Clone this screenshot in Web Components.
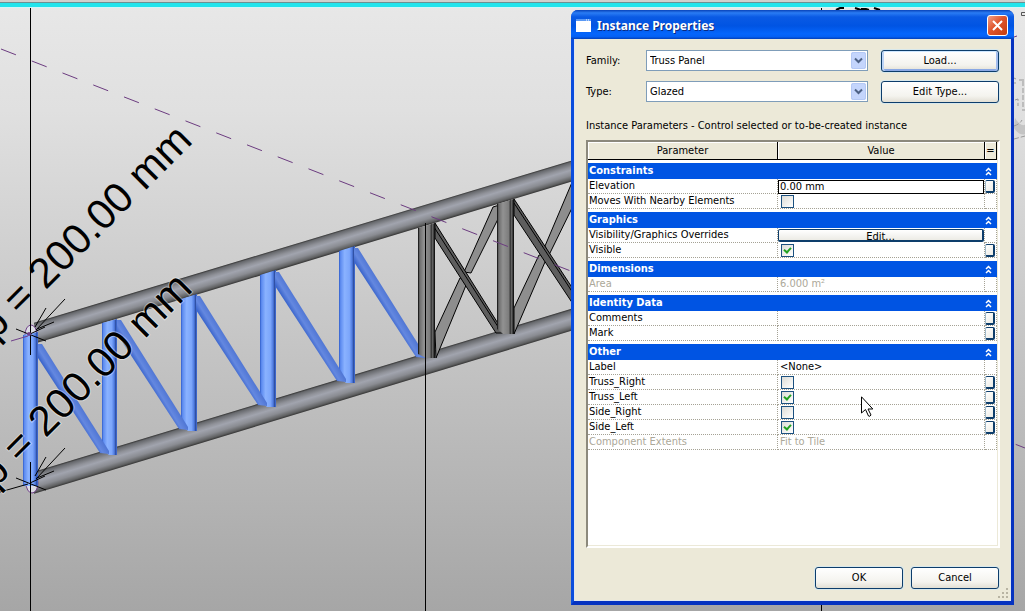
<!DOCTYPE html>
<html lang="en">
<head>
<meta charset="utf-8">
<title>Instance Properties</title>
<style>
html, body { margin: 0; height: 100%; }
body { font: 11px/14px "DejaVu Sans Condensed", "DejaVu Sans", sans-serif; color: #000; overflow: hidden; }
</style>
</head>
<body>
<model-workspace>
  <truss-view></truss-view>
  <xp-dialog slot="window" heading="Instance Properties">
    <family-form></family-form>
    <property-list></property-list>
    <xp-button slot="actions">OK</xp-button>
    <xp-button slot="actions">Cancel</xp-button>
  </xp-dialog>
  <mouse-pointer slot="pointer"></mouse-pointer>
</model-workspace>

<script>
function define(name, html, setup) {
  const template = document.createElement('template');
  template.innerHTML = html;
  customElements.define(name, class extends HTMLElement {
    constructor() {
      super();
      this.attachShadow({ mode: 'open' }).append(template.content.cloneNode(true));
    }
    connectedCallback() { if (setup) setup(this, this.shadowRoot); }
  });
}

define('model-workspace', `
<style>
:host { display: flex; flex-direction: column; position: relative; min-height: 100vh; box-sizing: border-box; background: linear-gradient(#e8e8e8, #e0e0e0 18%, #a6a6a6); }
.strip { height: 5px; background: #22e4ec; border-top: 2px solid #d0d0cc; border-bottom: 1px solid #d4f4f6; box-shadow: inset 0 1px #6c9092; }
.view { flex: 1; display: flex; }
.view ::slotted(*) { flex: 1; }
slot[name=window]::slotted(*) { position: absolute; top: 10px; right: 11px; bottom: 6px; width: 443px; }
slot[name=pointer]::slotted(*) { position: absolute; left: 861px; top: 396px; }
</style>
<div class="strip"></div>
<div class="view"><slot></slot></div>
<slot name="window"></slot>
<slot name="pointer"></slot>`);

define('truss-view', `
<style>
:host { display: block; position: relative; }
svg { position: absolute; left: 0; top: -8px; width: 100%; height: calc(100% + 8px); }
text { font: 42px "Liberation Sans", Arial, sans-serif; }
</style>
<svg aria-label="Truss model">
  <defs>
    <linearGradient id="top" gradientUnits="userSpaceOnUse" x1="37" y1="321.9" x2="42.81" y2="341.15">
      <stop offset="0" stop-color="#333"/><stop offset=".08" stop-color="#66686c"/><stop offset=".3" stop-color="#8f9198"/><stop offset=".45" stop-color="#a1a4ae"/><stop offset=".7" stop-color="#8a8c92"/><stop offset=".9" stop-color="#606162"/><stop offset="1" stop-color="#333"/>
    </linearGradient>
    <linearGradient id="bot" gradientUnits="userSpaceOnUse" x1="37" y1="470.9" x2="43.11" y2="491.05">
      <stop offset="0" stop-color="#333"/><stop offset=".08" stop-color="#66686c"/><stop offset=".3" stop-color="#8f9198"/><stop offset=".45" stop-color="#a1a4ae"/><stop offset=".7" stop-color="#8a8c92"/><stop offset=".9" stop-color="#606162"/><stop offset="1" stop-color="#333"/>
    </linearGradient>
    <linearGradient id="post">
      <stop offset="0" stop-color="#2f5cc8"/><stop offset=".1" stop-color="#5e8cf0"/><stop offset=".35" stop-color="#8ab2ff"/><stop offset=".65" stop-color="#7ca6fb"/><stop offset=".82" stop-color="#4f7be0"/><stop offset=".92" stop-color="#2a4a9c"/><stop offset="1" stop-color="#4878e8"/>
    </linearGradient>
    <linearGradient id="brace" gradientUnits="userSpaceOnUse" x1="66" y1="402" x2="79" y2="394">
      <stop offset="0" stop-color="#3c66cc"/><stop offset=".3" stop-color="#6488e0"/><stop offset=".7" stop-color="#5076d4"/><stop offset="1" stop-color="#2c4ca4"/>
    </linearGradient>
    <linearGradient id="steel">
      <stop offset="0" stop-color="#000"/><stop offset=".1" stop-color="#6c6c6c"/><stop offset=".35" stop-color="#929292"/><stop offset=".7" stop-color="#7c7c7c"/><stop offset=".78" stop-color="#333"/><stop offset=".86" stop-color="#666"/><stop offset="1" stop-color="#000"/>
    </linearGradient>
  </defs>

  <!-- chords -->
  <path fill="url(#top)" d="M34 322.800 L620 146 V167 L34 343.800Z"/>
  <path fill="url(#bot)" d="M34 471.800 L620 294 V316 L34 493.800Z"/>
  <!-- start of the chords -->
  <g stroke="#70408a" stroke-width="1" fill="#dcdce4">
    <ellipse cx="31" cy="335" rx="6" ry="10"/>
    <ellipse cx="32" cy="483" rx="6" ry="10"/>
  </g>
  <!-- selected posts and braces -->
  <g fill="url(#post)">
    <path d="M23 335 L38 332 V486 H23Z"/>
    <path d="M102 323 L117 319 V455 L109 455 L102 449Z"/>
    <path d="M181 299 L197 294 V431 L188 431 L181 425Z"/>
    <path d="M260 275 L276 270 V407 L267 407 L260 401Z"/>
    <path d="M339 251 L355 246 V383 L346 383 L339 377Z"/>
  </g>
  <g fill="url(#brace)">
    <path id="b" d="M38 344 L42 344 L109 451 V454 L100 453 L38 358Z"/>
    <use href="#b" x="79" y="-24"/><use href="#b" x="158" y="-48"/><use href="#b" x="237" y="-72"/><use href="#b" x="316" y="-96"/>
  </g>
  <!-- crossed steel bays -->
  <g stroke="#000" stroke-width="1">
    <path fill="#8e8e8e" d="M493 207 L506 203 L471 273 L464 272Z M460 278 L469 278 L436 358 L435 332Z"/>
    <path fill="#5e5e5e" d="M435 223 L504 333 H496 L435 238Z"/>
    <path fill="none" d="M434 227 L502 333"/>
    <path fill="#8e8e8e" d="M573 180 V206 L549 255 L545 246Z M539 255 L548 255 L514 334 V308Z"/>
    <path fill="#5e5e5e" d="M514 199 L573 289 V304 L514 215Z"/>
    <path fill="none" d="M514 203 L573 293"/>
  </g>
  <path fill="url(#steel)" d="M418 228 L435 223 V358 H426 L418 354Z"/>
  <path fill="url(#steel)" d="M497 204 L514 199 V334 H503 L497 329Z"/>

  <!-- reference planes -->
  <g stroke="#000" stroke-width="1" shape-rendering="crispEdges">
    <path d="M30.500 8V355M30.500 462V620M425.500 223V620M821.500 8V620"/>
  </g>
  <path d="M1 49 L1025 448" stroke="#6c3c80" fill="none" stroke-dasharray="16 17"/>
  <!-- dimension marks at both ends -->
  <g id="m" stroke="#000" fill="none">
    <path d="M16 329 L46 341M36 330 L65 299M37 329 L54 322M35 327 L46 308M30 334 L45 327"/>
  </g>
  <use href="#m" y="149"/>
  <path d="M11 341 L28 336" stroke="#70408a"/><path d="M0 492 L28 484" stroke="#000"/>
  <circle cx="29" cy="334" r="2" fill="#70408a"/>

  <g text-anchor="end">
    <text transform="translate(194 142) rotate(-45)">p = 200.00 mm</text>
    <text transform="translate(194 290) rotate(-45)" stroke="#fff" stroke-width="2" stroke-opacity=".4" paint-order="stroke">p = 200.00 mm</text>
  </g>

  <!-- fragments of annotation and view cube round the dialog -->
  <path d="M836 10l4-2h4M855 8l6 2M861 9h5l3 1M874 8l6 2" stroke="#000" stroke-width="2" fill="none"/>
  <path d="M1026 12.500H1021.500V15.500H1026" stroke="#555" fill="none"/>
  <path d="M1014 37l3-1" stroke="#6c3c80"/>
  <path d="M1015 118 Q1021 128 1026 124 V134 Q1019 136 1014 128Z" fill="#aaa" opacity=".5"/>
  <path d="M1014 78l2 1M1019 80h6M1014 83h2M1023 81v26M1015 100l3-1v7M1022 110h4M1014 139l11-3M1014 126q6-2 8-6" stroke="#999" fill="none" stroke-dasharray="5 2"/>
</svg>`);

define('mouse-pointer', `
<style>:host { display: block; pointer-events: none; } svg { display: block; }</style>
<svg width="13" height="22" viewBox="0 0 13 22" aria-hidden="true"><path d="M.5 .8V17l4-3.500 3 6.500q1.500 1 2.500-1l-3-6h4.800Z" fill="#fff" stroke="#000"/></svg>`);

define('xp-button', `
<style>
:host { display: block; }
button { box-sizing: border-box; display: block; width: 100%; height: 22px; padding: 0; font: inherit; line-height: 20px; color: #000; border: 1px solid #0d3d6b; border-radius: 3px; background: linear-gradient(#fff, #f4f3ee 70%, #e2dfd4); box-shadow: 0 0 0 1px #d8e8ec; }
:host([focused]) button { box-shadow: 0 0 0 1px #d8e8ec, inset 0 1px #cee7ff, inset 2px 0 #bcd4f6, inset -2px 0 #a2bdee, inset 0 -2px #8aa8e4; }
</style>
<button type="button"><slot></slot></button>`);

define('xp-select', `
<style>
:host { display: block; position: relative; }
select { appearance: none; box-sizing: border-box; display: block; width: 100%; height: 21px; margin: 0; padding: 0 20px 0 3px; font: inherit; color: #000; background: #fff; border: 1px solid #7f9db9; border-radius: 0; }
svg { position: absolute; right: 2px; top: 2px; pointer-events: none; }
</style>
<select></select>
<svg width="15" height="17" viewBox="0 0 15 17" aria-hidden="true"><rect width="15" height="17" rx="2" fill="#bccffb"/><rect x=".5" y=".5" width="14" height="16" rx="2" fill="#c4d5fc" stroke="#b4c8f4"/><path d="M4 6.500l3.500 3.500L11 6.500" fill="none" stroke="#4d6185" stroke-width="2"/></svg>`,
(host, root) => {
  const s = root.querySelector('select');
  s.setAttribute('aria-label', host.getAttribute('label'));
  s.replaceChildren(new Option(host.getAttribute('value')));
});

define('family-form', `
<style>
:host { display: grid; grid-template-columns: 60px minmax(0, 1fr) 118px; grid-auto-rows: 22px; row-gap: 9px; padding-right: 1px; }
label { line-height: 22px; }
xp-select { margin-right: 13px; }
p { grid-column: 1 / -1; margin: 7px 0 0; }
</style>
<label>Family:</label><xp-select label="Family" value="Truss Panel"></xp-select><xp-button focused>Load...</xp-button>
<label>Type:</label><xp-select label="Type" value="Glazed"></xp-select><xp-button>Edit Type...</xp-button>
<p>Instance Parameters - Control selected or to-be-created instance</p>`,
(host, root) => {
  root.querySelectorAll('label').forEach(l => { l.onclick = () => l.nextElementSibling.shadowRoot.querySelector('select').focus(); });
});

define('xp-dialog', `
<style>
:host { display: flex; flex-direction: column; box-sizing: border-box; border: 3px solid #0a4ddd; border-top: 0; border-right-color: #0532c0; border-bottom: 4px solid #0532c0; border-radius: 7px 7px 0 0; background: #0855dd; }
header { display: flex; align-items: center; height: 29px; box-sizing: border-box; margin: 0 -3px; padding: 2px 6px 0 5px; border-radius: 7px 7px 0 0; background: linear-gradient(#0842b8, #2a7cf4 10%, #0a5ae4 24%, #0054e3 55%, #0566fc 82%, #0460f4 92%, #0340b8); }
header svg { display: block; }
h1 { flex: 1; margin: 0 0 0 5px; font: bold 12px/18px "Noto Sans", "Open Sans", sans-serif; color: #fff; text-shadow: 1px 1px #0a2a80; }
.close { width: 21px; height: 21px; padding: 0; border: 1px solid #fff; border-radius: 3px; background: linear-gradient(135deg, #f0a088, #e0552c 45%, #c43c10); }
.body { flex: 1; display: flex; flex-direction: column; padding: 11px 10px 11px 11px; background: #ece9d8; border: 1px solid #dfe6ee; border-top: 0; position: relative; }
::slotted(property-list) { flex: 1; margin-top: 6px; }
footer { display: grid; grid-template-columns: 88px 88px; gap: 8px; justify-content: end; margin-top: 19px; padding-right: 1px; }
.grip { position: absolute; right: 1px; bottom: 1px; }
</style>
<header>
  <svg width="16" height="14" viewBox="0 0 16 14" aria-hidden="true"><rect width="15" height="13" fill="#fff"/><rect width="15" height="2" fill="#5a98f4"/><path d="M10 1h1M12 1h1" stroke="#fff"/></svg>
  <h1></h1>
  <button class="close" type="button" aria-label="Close"><svg width="19" height="19" viewBox="0 0 19 19"><path d="M5 5l9 9M14 5l-9 9" stroke="#fff" stroke-width="2"/></svg></button>
</header>
<div class="body">
  <slot></slot>
  <footer><slot name="actions"></slot></footer>
  <svg class="grip" width="11" height="11" aria-hidden="true"><path fill="#b8b4a3" d="M8 0h2v2h-2zM4 4h2v2h-2zM8 4h2v2h-2zM0 8h2v2h-2zM4 8h2v2h-2zM8 8h2v2h-2z"/></svg>
</div>`,
(host, root) => { root.querySelector('h1').textContent = host.getAttribute('heading'); });

const groups = [
  ['Constraints', [['Elevation', 'input', '0.00 mm', 1], ['Moves With Nearby Elements', 'check', false, 0]]],
  ['Graphics', [['Visibility/Graphics Overrides', 'button', 'Edit...', 0], ['Visible', 'check', true, 1]]],
  ['Dimensions', [['Area', 'off', '6.000 m²', 0]]],
  ['Identity Data', [['Comments', 'text', '', 1], ['Mark', 'text', '', 1]]],
  ['Other', [['Label', 'text', '<None>', 0], ['Truss_Right', 'check', false, 1], ['Truss_Left', 'check', true, 1],
    ['Side_Right', 'check', false, 1], ['Side_Left', 'check', true, 1], ['Component Extents', 'off', 'Fit to Tile', 0]]]
];

define('property-list', `
<style>
:host { display: block; background: #fff; border: 2px solid; border-color: #8c897c #fff #fff #8c897c; box-shadow: inset -1px -1px #ece9d8; padding: 0 1px 0 0; }
table { width: 100%; table-layout: fixed; border-collapse: separate; border-spacing: 0; }
.name { width: 190px; } .link { width: 12px; }
th, td { padding: 0; box-sizing: border-box; text-align: left; font-weight: normal; white-space: nowrap; overflow: hidden; }
thead th { height: 18px; line-height: 16px; text-align: center; background: #ece9d8; border-right: 1px solid #000; border-bottom: 1px solid #000; box-shadow: inset 1px 1px #fff; }
.group th { height: 19px; border-top: 3px solid #fff; background: #0054e3; color: #fff; font-weight: bold; line-height: 16px; padding: 0 5px 0 1px; }
.bar { display: flex; justify-content: space-between; align-items: center; height: 16px; }
.row th, .row td { height: 15px; line-height: 14px; border-bottom: 1px dotted #a5a295; border-right: 1px dotted #a5a295; }
.row th { padding-left: 1px; }
.row td { padding-left: 2px; }
.row .edit, .row .ext { padding: 0; }
.row .edit { border-bottom: 0; }
.off th, .off td { color: #aca899; }
input, button { box-sizing: border-box; display: block; margin: 0; font: inherit; color: #000; }
input[type=text] { width: 100%; height: 14px; padding: 0 1px; border: 1px solid #000; background: #fff; line-height: 12px; }
input[type=checkbox] { appearance: none; width: 13px; height: 13px; margin-left: 1px; border: 1px solid #1c5180; background: linear-gradient(135deg, #dcdcd7, #fff); position: relative; }
input:checked::after { content: ""; position: absolute; left: 3px; top: 1px; width: 3px; height: 5px; border: solid #21a121; border-width: 0 2px 2px 0; transform: rotate(42deg); }
.wide { width: 100%; height: 13px; margin: 1px 0; padding: 0; line-height: 13px; overflow: hidden; border: 1px solid #0d3d6b; border-right-width: 2px; border-bottom-width: 2px; border-radius: 2px; background: linear-gradient(#fff, #ecebe5); }
.more { width: 10px; height: 13px; padding: 0; border: 1px solid #9fb8c8; border-right: 2px solid #0d3d6b; border-bottom: 2px solid #0d3d6b; border-top-color: #0d3d6b; border-radius: 2px; background: linear-gradient(135deg, #fff, #ecebe5); }
</style>
<table>
  <colgroup><col class="name"><col><col class="link"></colgroup>
  <thead><tr><th scope="col">Parameter</th><th scope="col">Value</th><th scope="col">=</th></tr></thead>
</table>`,
(host, root) => {
  const table = root.querySelector('table');
  if (table.tBodies.length) return;
  const el = (tag, props = {}, ...kids) => { const n = Object.assign(document.createElement(tag), props); n.append(...kids); return n; };
  for (const [title, rows] of groups) {
    const body = el('tbody');
    const bar = el('div', { className: 'bar' }, title);
    bar.insertAdjacentHTML('beforeend', '<svg width="7" height="9" viewBox="0 0 7 9" aria-hidden="true"><path d="M1 4l2.500-2.500L6 4M1 8l2.500-2.500L6 8" fill="none" stroke="#fff" stroke-width="1.500"/></svg>');
    body.append(el('tr', { className: 'group' }, el('th', { colSpan: 3, scope: 'colgroup' }, bar)));
    for (const [name, kind, value, more] of rows) {
      const id = name.toLowerCase().replace(/\W/g, '-');
      const cell = el('td');
      const field = kind === 'check' || kind === 'input';
      if (kind === 'check') cell.append(el('input', { type: 'checkbox', checked: value, id }));
      else if (kind === 'input') { cell.className = 'edit'; cell.append(el('input', { type: 'text', value, id })); }
      else if (kind === 'button') { cell.className = 'edit'; cell.append(el('button', { type: 'button', className: 'wide' }, value)); }
      else cell.append(value);
      const ext = el('td', { className: 'ext' });
      if (more) { const b = el('button', { type: 'button', className: 'more' }); b.setAttribute('aria-label', 'Associate ' + name); ext.append(b); }
      body.append(el('tr', { className: 'row ' + kind },
        el('th', { scope: 'row' }, field ? el('label', { htmlFor: id }, name) : name), cell, ext));
    }
    table.append(body);
  }
});
</script>
</body>
</html>
